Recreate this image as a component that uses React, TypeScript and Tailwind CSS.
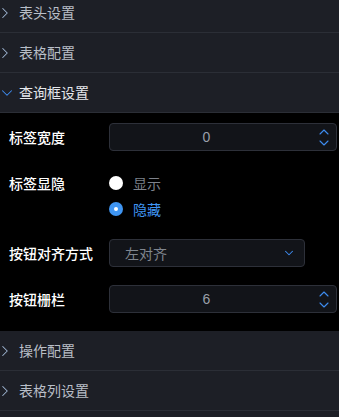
import { ChevronRight, ChevronDown, ChevronUp } from "lucide-react";

const cjk = { fontFamily: '"Noto Sans CJK SC", "Noto Sans", sans-serif' };

function Header({ title, open = false }: { title: string; open?: boolean }) {
  return (
    <div className="flex h-10 items-center border-b border-[#2b2e36] bg-[#1d1f26]">
      <div className="flex w-[19px] justify-start">
        {open ? (
          <ChevronDown size={18} strokeWidth={1.4} className="-ml-[2px] text-[#3e8cf0]" />
        ) : (
          <ChevronRight size={18} strokeWidth={1.4} className="-ml-[4px] text-[#9fb6d4]" />
        )}
      </div>
      <span className={`text-[14px] ${open ? "text-[#e6e8ec]" : "text-[#b9bec7]"}`}>{title}</span>
    </div>
  );
}

function NumberBox({ value }: { value: string }) {
  return (
    <div className="relative flex h-[28px] w-[228px] items-center justify-center rounded-[4px] border border-[#2d3039] bg-[#121419] pr-[33px]">
      <span className="text-[14px] text-[#9aa0aa]" style={{ fontFamily: '"Liberation Sans", sans-serif' }}>
        {value}
      </span>
      <ChevronUp size={16} strokeWidth={1.6} className="absolute right-[4px] top-0 text-[#3e8cf0]" />
      <ChevronDown size={16} strokeWidth={1.6} className="absolute right-[4px] top-[11px] text-[#3e8cf0]" />
    </div>
  );
}

function Label({ children }: { children: string }) {
  return <div className="w-[109px] shrink-0 pl-[9px] text-[14px] font-medium text-white">{children}</div>;
}

export default function App() {
  return (
    <div className="h-[417px] w-[339px] overflow-hidden bg-[#1d1f26]" style={cjk}>
      <div className="-mt-[7px]">
        <Header title="表头设置" />
        <Header title="表格配置" />
        <Header title="查询框设置" open />

        <div className="bg-black pb-[18px] pt-[10px]">
          <div className="flex h-[28px] items-center">
            <Label>标签宽度</Label>
            <NumberBox value="0" />
          </div>

          <div className="mt-[19px] flex">
            <div className="flex h-[26px] items-center">
              <Label>标签显隐</Label>
            </div>
            <div className="flex flex-col">
              <div className="flex h-[26px] items-center gap-[10px]">
                <span className="h-[14px] w-[14px] rounded-full bg-white" />
                <span className="text-[14px] text-[#7d828b]">显示</span>
              </div>
              <div className="flex h-[26px] items-center gap-[10px]">
                <span className="flex h-[14px] w-[14px] items-center justify-center rounded-full bg-[#3f95f2]">
                  <span className="h-[4px] w-[4px] rounded-full bg-white" />
                </span>
                <span className="text-[14px] text-[#3f95f2]">隐藏</span>
              </div>
            </div>
          </div>

          <div className="mt-[17px] flex h-[28px] items-center">
            <Label>按钮对齐方式</Label>
            <div className="flex h-[28px] w-[196px] items-center justify-between rounded-[4px] border border-[#2d3039] bg-[#121419] pl-[15px] pr-[8px]">
              <span className="text-[14px] text-[#80868f]">左对齐</span>
              <ChevronDown size={14} strokeWidth={1.8} className="text-[#3e8cf0]" />
            </div>
          </div>

          <div className="mt-[18px] flex h-[28px] items-center">
            <Label>按钮栅栏</Label>
            <NumberBox value="6" />
          </div>
        </div>

        <Header title="操作配置" />
        <Header title="表格列设置" />
      </div>
    </div>
  );
}
